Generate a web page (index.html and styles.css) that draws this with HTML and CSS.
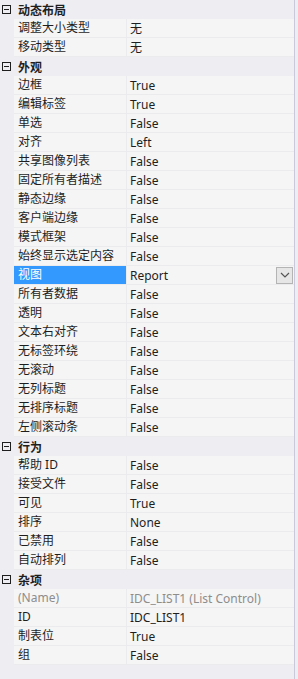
FILE: index.html
```html
<!DOCTYPE html>
<html lang="zh-CN">
<head>
  <meta charset="UTF-8">
  <title>属性</title>
  <link rel="stylesheet" href="styles.css">
</head>
<body>

  <div class="panel">
    <div class="grid">

      <div class="cat"><span class="box"></span><span class="cat-name">动态布局</span></div>
      <div class="row"><span class="name">调整大小类型</span><span class="val">无</span></div>
      <div class="row"><span class="name">移动类型</span><span class="val">无</span></div>

      <div class="cat"><span class="box"></span><span class="cat-name">外观</span></div>
      <div class="row"><span class="name">边框</span><span class="val">True</span></div>
      <div class="row"><span class="name">编辑标签</span><span class="val">True</span></div>
      <div class="row"><span class="name">单选</span><span class="val">False</span></div>
      <div class="row"><span class="name">对齐</span><span class="val">Left</span></div>
      <div class="row"><span class="name">共享图像列表</span><span class="val">False</span></div>
      <div class="row"><span class="name">固定所有者描述</span><span class="val">False</span></div>
      <div class="row"><span class="name">静态边缘</span><span class="val">False</span></div>
      <div class="row"><span class="name">客户端边缘</span><span class="val">False</span></div>
      <div class="row"><span class="name">模式框架</span><span class="val">False</span></div>
      <div class="row"><span class="name">始终显示选定内容</span><span class="val">False</span></div>
      <div class="row selected">
        <span class="name">视图</span>
        <span class="val">Report
          <span class="drop">
            <svg width="10" height="6" viewBox="0 0 10 6"><path d="M1 1 L5 5 L9 1" fill="none" stroke="#555" stroke-width="1.2"/></svg>
          </span>
        </span>
      </div>
      <div class="row"><span class="name">所有者数据</span><span class="val">False</span></div>
      <div class="row"><span class="name">透明</span><span class="val">False</span></div>
      <div class="row"><span class="name">文本右对齐</span><span class="val">False</span></div>
      <div class="row"><span class="name">无标签环绕</span><span class="val">False</span></div>
      <div class="row"><span class="name">无滚动</span><span class="val">False</span></div>
      <div class="row"><span class="name">无列标题</span><span class="val">False</span></div>
      <div class="row"><span class="name">无排序标题</span><span class="val">False</span></div>
      <div class="row"><span class="name">左侧滚动条</span><span class="val">False</span></div>

      <div class="cat"><span class="box"></span><span class="cat-name">行为</span></div>
      <div class="row"><span class="name">帮助 ID</span><span class="val">False</span></div>
      <div class="row"><span class="name">接受文件</span><span class="val">False</span></div>
      <div class="row"><span class="name">可见</span><span class="val">True</span></div>
      <div class="row"><span class="name">排序</span><span class="val">None</span></div>
      <div class="row"><span class="name">已禁用</span><span class="val">False</span></div>
      <div class="row"><span class="name">自动排列</span><span class="val">False</span></div>

      <div class="cat"><span class="box"></span><span class="cat-name">杂项</span></div>
      <div class="row readonly"><span class="name">(Name)</span><span class="val">IDC_LIST1 (List Control)</span></div>
      <div class="row"><span class="name">ID</span><span class="val">IDC_LIST1</span></div>
      <div class="row"><span class="name">制表位</span><span class="val">True</span></div>
      <div class="row"><span class="name">组</span><span class="val">False</span></div>

    </div>
    <div class="side"></div>
  </div>

</body>
</html>
```

FILE: styles.css
```css
body {
  margin: 0;
  background: #eeeef2;
  font-family: "Noto Sans", "Noto Sans CJK SC", sans-serif;
  font-size: 12px;
  color: #1e1e1e;
}

.panel {
  display: flex;
  height: 679px;
}

.grid {
  width: 294px;
  border-right: 1px solid #c9c9dc;
}

.side {
  flex: 1;
}

.cat {
  display: flex;
  align-items: center;
  height: 19px;
}

.box {
  width: 7px;
  height: 7px;
  border: 1px solid #1e1e1e;
  margin: 0 6px 0 2px;
  position: relative;
}

.box::after {
  content: "";
  position: absolute;
  left: 1px;
  top: 3px;
  width: 5px;
  height: 1px;
  background: #1e1e1e;
}

.cat-name {
  font-weight: bold;
  padding-left: 1px;
}

.row {
  display: flex;
  height: 18px;
  margin-left: 14px;
  border-bottom: 1px solid #ebebee;
  background: #f5f5f5;
}

.name {
  width: 108px;
  padding-left: 4px;
  border-right: 1px solid #ebebee;
  line-height: 18px;
  white-space: nowrap;
  overflow: hidden;
}

.val {
  flex: 1;
  display: flex;
  align-items: center;
  padding-left: 3px;
  white-space: nowrap;
}

.selected .name {
  background: #3399ff;
  color: #fff;
}

.readonly .name,
.readonly .val {
  color: #8d8d8d;
}

.drop {
  margin-left: auto;
  margin-right: 1px;
  width: 15px;
  height: 15px;
  border: 1px solid #b4b4b4;
  background: #e6e6e6;
  display: flex;
  align-items: center;
  justify-content: center;
}
```
